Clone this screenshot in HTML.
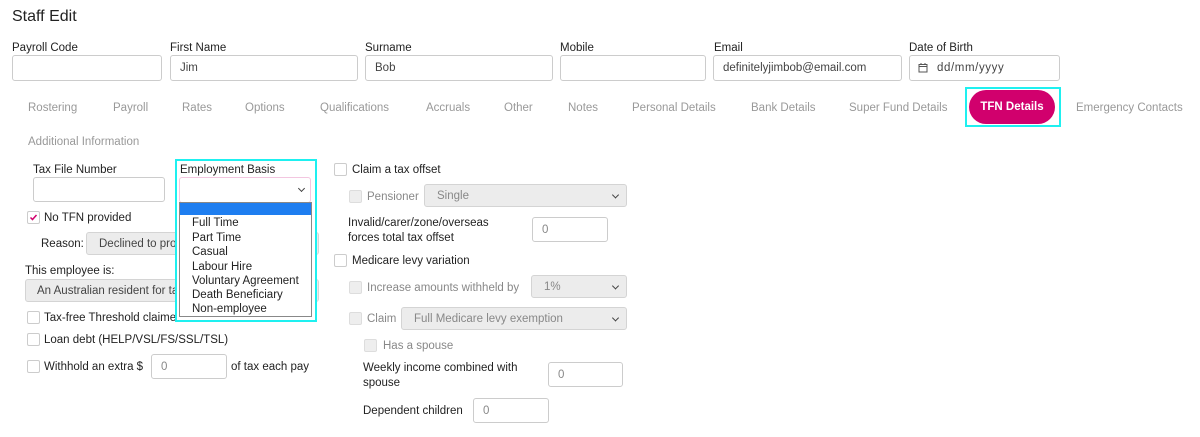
<!DOCTYPE html><html><head><style>
body{margin:0;width:1200px;height:437px;background:#fff;font-family:"Liberation Sans",sans-serif;color:#222;position:relative;overflow:hidden}
.a{position:absolute;white-space:nowrap}
.t{font-size:11.5px;transform:translateY(-40%)}
.inp{position:absolute;border:1px solid #ccc;border-radius:3px;background:#fff;box-sizing:border-box;font-size:11.5px;color:#444;padding-left:9px;display:flex;align-items:center}
.sel{position:absolute;border:1px solid #d4d4d4;border-radius:3px;background:#ececec;box-sizing:border-box;font-size:11.5px;color:#444;padding-left:12px;display:flex;align-items:center}
.sel.d{color:#888}
.sel:after{content:"";position:absolute;right:8px;top:50%;width:4px;height:4px;border-right:1.3px solid #444;border-bottom:1.3px solid #444;transform:translateY(-70%) rotate(45deg)}
.cb{position:absolute;width:11px;height:11px;border:1px solid #ccc;border-radius:2px;background:#fff}
.cb.d{background:#eee;border-color:#ddd}
.tab{font-size:11.5px;color:#999;transform:translateY(-40%)}
.gray{color:#888}
</style></head><body>
<div class="a" style="left:12px;top:8px;font-size:16px">Staff Edit</div>
<div class="a t" style="left:12px;top:47px">Payroll Code</div>
<div class="a t" style="left:170px;top:47px">First Name</div>
<div class="a t" style="left:365px;top:47px">Surname</div>
<div class="a t" style="left:560px;top:47px">Mobile</div>
<div class="a t" style="left:714px;top:47px">Email</div>
<div class="a t" style="left:909px;top:47px">Date of Birth</div>
<div class="inp" style="left:12px;top:55px;width:150px;height:26px"></div>
<div class="inp" style="left:170px;top:55px;width:188px;height:26px">Jim</div>
<div class="inp" style="left:365px;top:55px;width:188px;height:26px">Bob</div>
<div class="inp" style="left:560px;top:55px;width:146px;height:26px"></div>
<div class="inp" style="left:713px;top:55px;width:189px;height:26px">definitelyjimbob@email.com</div>
<div class="inp" style="left:909px;top:55px;width:151px;height:26px;padding-left:8px"><svg width="10" height="10" viewBox="0 0 10 10"><rect x="1" y="1.5" width="8" height="7.5" fill="none" stroke="#555"/><line x1="1" y1="3.5" x2="9" y2="3.5" stroke="#555"/><line x1="3" y1="0" x2="3" y2="2" stroke="#555"/><line x1="7" y1="0" x2="7" y2="2" stroke="#555"/></svg><span style="margin-left:9px;letter-spacing:.6px">dd/mm/yyyy</span></div>
<div class="a tab" style="left:28px;top:107px">Rostering</div>
<div class="a tab" style="left:113px;top:107px">Payroll</div>
<div class="a tab" style="left:182px;top:107px">Rates</div>
<div class="a tab" style="left:245px;top:107px">Options</div>
<div class="a tab" style="left:320px;top:107px">Qualifications</div>
<div class="a tab" style="left:426px;top:107px">Accruals</div>
<div class="a tab" style="left:504px;top:107px">Other</div>
<div class="a tab" style="left:568px;top:107px">Notes</div>
<div class="a tab" style="left:632px;top:107px">Personal Details</div>
<div class="a tab" style="left:751px;top:107px">Bank Details</div>
<div class="a tab" style="left:849px;top:107px">Super Fund Details</div>
<div class="a" style="left:965px;top:87px;width:92px;height:36px;border:2px solid #1ef0f0"></div>
<div class="a" style="left:969px;top:90px;width:86px;height:34px;border-radius:17px;background:#d1006d;color:#fff;font-size:11.5px;font-weight:bold;display:flex;align-items:center;justify-content:center">TFN Details</div>
<div class="a tab" style="left:1076px;top:107px">Emergency Contacts</div>
<div class="a tab" style="left:28px;top:141px">Additional Information</div>

<div class="a t" style="left:33px;top:169px">Tax File Number</div>
<div class="inp" style="left:33px;top:177px;width:132px;height:25px"></div>
<div class="cb" style="left:27px;top:211px"></div>
<svg class="a" style="left:28px;top:212px" width="11" height="11"><path d="M2.5 5.5 L4.5 7.5 L8.5 3" fill="none" stroke="#d1006d" stroke-width="1.5"/></svg>
<div class="a t" style="left:44px;top:217px">No TFN provided</div>
<div class="a t" style="left:41px;top:243px">Reason:</div>
<div class="sel" style="left:86px;top:232px;width:233px;height:23px">Declined to provide</div>
<div class="a t" style="left:25px;top:270px">This employee is:</div>
<div class="sel" style="left:25px;top:279px;width:294px;height:23px;padding-left:11px">An Australian resident for tax purposes</div>
<div class="cb" style="left:27px;top:311px"></div>
<div class="a t" style="left:44px;top:317px">Tax-free Threshold claimed</div>
<div class="cb" style="left:27px;top:333px"></div>
<div class="a t" style="left:44px;top:339px">Loan debt (HELP/VSL/FS/SSL/TSL)</div>
<div class="cb" style="left:27px;top:360px"></div>
<div class="a t" style="left:44px;top:366px">Withhold an extra $</div>
<div class="inp" style="left:151px;top:354px;width:76px;height:25px" ><span class="gray">0</span></div>
<div class="a t" style="left:231px;top:366px">of tax each pay</div>

<div class="a" style="left:175px;top:159px;width:138px;height:159px;border:2px solid #1ef0f0;background:#fff"></div>
<div class="a t" style="left:180px;top:169px">Employment Basis</div>
<div class="inp" style="left:179px;top:177px;width:132px;height:26px;border-color:#f3c6e0"></div>
<div class="a" style="left:299px;top:186px;width:4px;height:4px;border-right:1.3px solid #444;border-bottom:1.3px solid #444;transform:rotate(45deg)"></div>
<div class="a" style="left:179px;top:202px;width:131px;height:113px;border:1px solid #888;background:#fff"></div>
<div class="a" style="left:180px;top:203px;width:131px;height:12px;background:#1e7ef0"></div>
<div class="a t" style="left:192px;top:222px">Full Time</div>
<div class="a t" style="left:192px;top:237px">Part Time</div>
<div class="a t" style="left:192px;top:251px">Casual</div>
<div class="a t" style="left:192px;top:266px">Labour Hire</div>
<div class="a t" style="left:192px;top:280px">Voluntary Agreement</div>
<div class="a t" style="left:192px;top:294px">Death Beneficiary</div>
<div class="a t" style="left:192px;top:308px">Non-employee</div>

<div class="cb" style="left:334px;top:163px"></div>
<div class="a t" style="left:352px;top:169px">Claim a tax offset</div>
<div class="cb d" style="left:349px;top:190px"></div>
<div class="a t gray" style="left:367px;top:196px">Pensioner</div>
<div class="sel d" style="left:424px;top:184px;width:203px;height:23px">Single</div>
<div class="a t" style="left:348px;top:222px">Invalid/carer/zone/overseas</div>
<div class="a t" style="left:348px;top:237px">forces total tax offset</div>
<div class="inp" style="left:532px;top:217px;width:76px;height:25px"><span class="gray">0</span></div>
<div class="cb" style="left:334px;top:254px"></div>
<div class="a t" style="left:352px;top:260px">Medicare levy variation</div>
<div class="cb d" style="left:349px;top:281px"></div>
<div class="a t gray" style="left:367px;top:287px">Increase amounts withheld by</div>
<div class="sel d" style="left:531px;top:275px;width:96px;height:23px">1%</div>
<div class="cb d" style="left:349px;top:312px"></div>
<div class="a t gray" style="left:367px;top:318px">Claim</div>
<div class="sel d" style="left:401px;top:307px;width:226px;height:23px">Full Medicare levy exemption</div>
<div class="cb d" style="left:364px;top:339px"></div>
<div class="a t gray" style="left:383px;top:345px">Has a spouse</div>
<div class="a t" style="left:363px;top:367px">Weekly income combined with</div>
<div class="a t" style="left:363px;top:382px">spouse</div>
<div class="inp" style="left:548px;top:362px;width:75px;height:25px"><span class="gray">0</span></div>
<div class="a t" style="left:363px;top:410px">Dependent children</div>
<div class="inp" style="left:473px;top:398px;width:76px;height:25px"><span class="gray">0</span></div>
</body></html>
